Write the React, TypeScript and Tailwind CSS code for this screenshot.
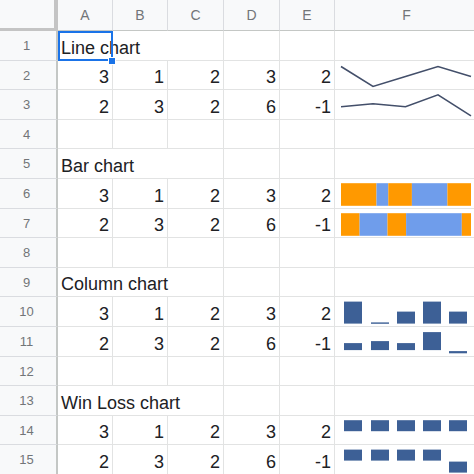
import React from "react";

type Row =
  | { kind: "title"; text: string }
  | { kind: "data"; nums: number[]; spark: React.ReactNode }
  | { kind: "empty" };

const LINE = "#434f6a";
const BAR = "#3d6096";
const ORANGE = "#ff9900";
const BLUE = "#6f9deb";

function LineSpark({ ys }: { ys: number[] }) {
  const xs = [6, 38, 70.5, 103, 136];
  const pts = xs.map((x, i) => `${x},${ys[i]}`).join(" ");
  return (
    <svg width="143" height="29" className="block overflow-visible">
      <polyline points={pts} fill="none" stroke={LINE} strokeWidth="1.6" strokeLinejoin="miter" />
    </svg>
  );
}

function BarSpark({ widths }: { widths: number[] }) {
  let x = 6;
  return (
    <svg width="143" height="29" className="block">
      {widths.map((w, i) => {
        const r = <rect key={i} x={x} y={4.2} width={w} height={22.6} fill={i % 2 === 0 ? ORANGE : BLUE} />;
        x += w;
        return r;
      })}
    </svg>
  );
}

// [y, height] for each of the five columns
function ColSpark({ bars }: { bars: [number, number][] }) {
  const xs = [9, 36, 62, 88, 114];
  return (
    <svg width="143" height="29" className="block">
      {bars.map(([y, h], i) => (
        <rect key={i} x={xs[i]} y={y} width={18} height={h} fill={BAR} />
      ))}
    </svg>
  );
}

const rows: Row[] = [
  { kind: "title", text: "Line chart" },
  { kind: "data", nums: [3, 1, 2, 3, 2], spark: <LineSpark ys={[5.5, 25.5, 15.5, 5.5, 15.5]} /> },
  { kind: "data", nums: [2, 3, 2, 6, -1], spark: <LineSpark ys={[16.8, 13.8, 16.8, 4.8, 25.8]} /> },
  { kind: "empty" },
  { kind: "title", text: "Bar chart" },
  { kind: "data", nums: [3, 1, 2, 3, 2], spark: <BarSpark widths={[35.5, 11.8, 23.6, 35.5, 23.6]} /> },
  { kind: "data", nums: [2, 3, 2, 6, -1], spark: <BarSpark widths={[18.6, 27.9, 18.6, 55.7, 9.2]} /> },
  { kind: "empty" },
  { kind: "title", text: "Column chart" },
  {
    kind: "data",
    nums: [3, 1, 2, 3, 2],
    spark: <ColSpark bars={[[4.6, 22], [25.4, 1.4], [14.6, 12], [4.6, 22], [14.6, 12]]} />,
  },
  {
    kind: "data",
    nums: [2, 3, 2, 6, -1],
    spark: <ColSpark bars={[[16.1, 7], [14.1, 9], [16.1, 7], [5.1, 18], [24.1, 2.2]]} />,
  },
  { kind: "empty" },
  { kind: "title", text: "Win Loss chart" },
  { kind: "data", nums: [3, 1, 2, 3, 2], spark: <ColSpark bars={[[4.2, 11], [4.2, 11], [4.2, 11], [4.2, 11], [4.2, 11]]} /> },
  { kind: "data", nums: [2, 3, 2, 6, -1], spark: <ColSpark bars={[[4.6, 11], [4.6, 11], [4.6, 11], [4.6, 11], [16.6, 11]]} /> },
];

const cols = ["A", "B", "C", "D", "E", "F"];

export default function App() {
  return (
    <div className="w-[474px] h-[474px] overflow-hidden bg-white" style={{ fontFamily: "'Liberation Sans', Arial, sans-serif" }}>
      <div className="relative grid w-[479px] grid-cols-[58px_55px_55px_56px_56px_55px_144px] grid-rows-[31px_repeat(15,29.6px)]">
        {/* corner */}
        <div className="bg-[#f8f9fa] border-r-[4px] border-b-[3px] border-[#c4c4c4]" />
        {cols.map((c) => (
          <div
            key={c}
            className="flex items-center justify-center pt-[1px] bg-[#f8f9fa] border-r border-b border-r-[#dadce0] border-b-[#c4c7c5] text-[14px] text-[#727578]"
          >
            {c}
          </div>
        ))}

        {rows.map((row, i) => (
          <React.Fragment key={i}>
            <div className="flex items-center justify-center pr-[3px] pt-[1px] bg-[#f8f9fa] border-r-2 border-b border-r-[#c4c7c5] border-b-[#dadce0] text-[13px] text-[#727578]">
              {i + 1}
            </div>
            {row.kind === "title" && (
              <>
                <div className="col-span-3 flex items-end pl-[3px] pb-[3px] leading-[17px] border-r border-b border-[#e2e3e3] text-[18px] text-[#202124] whitespace-nowrap">
                  {row.text}
                </div>
                <div className="border-r border-b border-[#e2e3e3]" />
                <div className="border-r border-b border-[#e2e3e3]" />
                <div className="border-b border-[#e2e3e3]" />
              </>
            )}
            {row.kind === "data" && (
              <>
                {row.nums.map((n, j) => (
                  <div
                    key={j}
                    className="flex items-end justify-end pr-[3px] pb-[3px] leading-[17px] border-r border-b border-[#e2e3e3] text-[18px] text-[#202124]"
                  >
                    {n}
                  </div>
                ))}
                <div className="border-b border-[#e2e3e3] overflow-hidden">{row.spark}</div>
              </>
            )}
            {row.kind === "empty" && (
              <>
                {[0, 1, 2, 3, 4].map((j) => (
                  <div key={j} className="border-r border-b border-[#e2e3e3]" />
                ))}
                <div className="border-b border-[#e2e3e3]" />
              </>
            )}
          </React.Fragment>
        ))}

        {/* active cell selection over A1 */}
        <div className="absolute left-[58px] top-[31px] w-[55px] h-[30px] border-2 border-[#1a73e8] pointer-events-none" />
        <div className="absolute left-[108px] top-[57px] w-[8px] h-[8px] bg-[#1a73e8] border border-white" />
      </div>
    </div>
  );
}
